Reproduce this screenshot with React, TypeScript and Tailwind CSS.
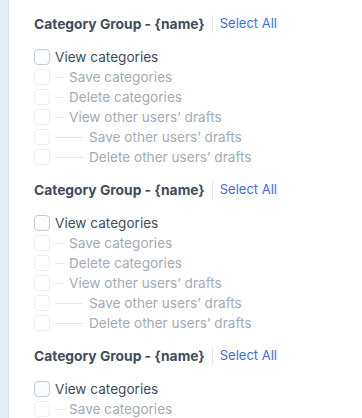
import React from "react";

const rows: { label: string; level: number; disabled: boolean }[] = [
  { label: "View categories", level: 0, disabled: false },
  { label: "Save categories", level: 1, disabled: true },
  { label: "Delete categories", level: 1, disabled: true },
  { label: "View other users’ drafts", level: 1, disabled: true },
  { label: "Save other users’ drafts", level: 2, disabled: true },
  { label: "Delete other users’ drafts", level: 2, disabled: true },
];

function Group() {
  return (
    <div className="flex flex-col">
      <div className="flex items-center h-[20px] mt-[1px]">
        <span className="text-[13.8px] font-bold text-[#3f4d5a]">Category Group - {"{name}"}</span>
        <span className="mx-[7px] w-px h-[18px] bg-[#e3e6ea]" />
        <span className="text-[13px] text-[#3b6fe0]">Select All</span>
      </div>
      <div className="flex flex-col mt-[13px]">
        {rows.map((r, i) => (
          <div key={i} className="flex items-center h-[20px]">
            <span
              className={
                r.disabled
                  ? "shrink-0 w-[16px] h-[16px] rounded-[4px] border border-[#eceef1] bg-white"
                  : "shrink-0 w-[16px] h-[16px] rounded-[4px] border border-[#c4ccd6] bg-[#fbfcfe]"
              }
            />
            {r.level === 1 && <span className="ml-[5px] w-[8px] h-px bg-[#e3e6ea]" />}
            {r.level === 2 && <span className="ml-[5px] w-[28px] h-px bg-[#e3e6ea]" />}
            <span
              className={
                r.disabled
                  ? "ml-[6px] text-[13.6px] text-[#a4abb3] whitespace-nowrap"
                  : "ml-[5px] text-[13.6px] text-[#3f4d5a] whitespace-nowrap"
              }
            >
              {r.label}
            </span>
          </div>
        ))}
      </div>
    </div>
  );
}

export default function App() {
  return (
    <div
      className="flex w-[362px] h-[418px] bg-white overflow-hidden"
      style={{ fontFamily: 'Inter, "Liberation Sans", Arial, sans-serif' }}
    >
      <div className="w-[9px] shrink-0 bg-[#e4ecf6] border-r border-[#d8e0ea]" />
      <div className="flex flex-col gap-[12px] pl-[25px] pt-[13px]">
        <Group />
        <Group />
        <Group />
      </div>
    </div>
  );
}
